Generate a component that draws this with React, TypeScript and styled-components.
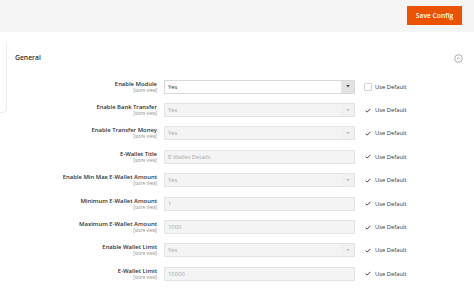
import React from "react";
import styled, { createGlobalStyle } from "styled-components";

const GlobalStyle = createGlobalStyle`
  html, body {
    margin: 0;
    padding: 0;
    background: #ffffff;
    font-family: "Open Sans", "DejaVu Sans", sans-serif;
    color: #303030;
  }
`;

type Field = {
  label: string;
  value: string;
  kind: "select" | "text";
  disabled: boolean;
  useDefault: boolean;
};

const fields: Field[] = [
  { label: "Enable Module", value: "Yes", kind: "select", disabled: false, useDefault: false },
  { label: "Enable Bank Transfer", value: "Yes", kind: "select", disabled: true, useDefault: true },
  { label: "Enable Transfer Money", value: "Yes", kind: "select", disabled: true, useDefault: true },
  { label: "E-Wallet Title", value: "E-Wallet Details", kind: "text", disabled: true, useDefault: true },
  { label: "Enable Min Max E-Wallet Amount", value: "Yes", kind: "select", disabled: true, useDefault: true },
  { label: "Minimum E-Wallet Amount", value: "1", kind: "text", disabled: true, useDefault: true },
  { label: "Maximum E-Wallet Amount", value: "1000", kind: "text", disabled: true, useDefault: true },
  { label: "Enable Wallet Limit", value: "Yes", kind: "select", disabled: true, useDefault: true },
  { label: "E-Wallet Limit", value: "10000", kind: "text", disabled: true, useDefault: true },
];

export default function App() {
  return (
    <Page>
      <GlobalStyle />
      <TopBar>
        <SaveButton>Save Config</SaveButton>
      </TopBar>
      <Body>
        <SideRail />
        <Main>
          <SectionHead>
            <SectionTitle>General</SectionTitle>
            <CollapseIcon width="9" height="9" viewBox="0 0 9 9">
              <circle cx="4.5" cy="4.5" r="3.8" fill="none" stroke="#9a9a9a" strokeWidth="0.8" />
              <path d="M2.9 5.2 L4.5 3.6 L6.1 5.2" fill="none" stroke="#9a9a9a" strokeWidth="0.8" />
            </CollapseIcon>
          </SectionHead>
          <Rows>
            {fields.map((f) => (
              <Row key={f.label}>
                <LabelCell>
                  <Label>{f.label}</Label>
                  <Scope>[store view]</Scope>
                </LabelCell>
                <Control $disabled={f.disabled}>
                  <ControlValue>{f.value}</ControlValue>
                  {f.kind === "select" && (
                    <Arrow $disabled={f.disabled}>
                      <svg width="4" height="3" viewBox="0 0 4 3">
                        <path d="M0 0 L4 0 L2 2.5 Z" fill={f.disabled ? "#c4c4c4" : "#555"} />
                      </svg>
                    </Arrow>
                  )}
                </Control>
                <DefaultCell>
                  <Box $checked={f.useDefault}>
                    {f.useDefault && (
                      <svg width="6" height="5" viewBox="0 0 6 5">
                        <path d="M0.6 2.6 L2.2 4.1 L5.4 0.8" fill="none" stroke="#303030" strokeWidth="0.9" />
                      </svg>
                    )}
                  </Box>
                  <DefaultText>Use Default</DefaultText>
                </DefaultCell>
              </Row>
            ))}
          </Rows>
        </Main>
      </Body>
    </Page>
  );
}

const Page = styled.div`
  width: 474px;
  height: 292px;
  overflow: hidden;
`;

const TopBar = styled.div`
  height: 32px;
  background: #f5f5f5;
  display: flex;
  justify-content: flex-end;
  align-items: flex-start;
  padding: 6px 12px 0 0;
  box-sizing: border-box;
`;

const SaveButton = styled.button`
  width: 55px;
  height: 19px;
  border: none;
  background: #eb5202;
  color: #ffffff;
  font-family: "Open Sans", sans-serif;
  font-weight: 600;
  font-size: 6.7px;
  padding: 0;
  display: flex;
  align-items: center;
  justify-content: center;
`;

const Body = styled.div`
  display: flex;
`;

const SideRail = styled.div`
  width: 7px;
  height: 70px;
  margin-top: 11px;
  box-sizing: border-box;
  border: 1px solid #ececec;
  border-left: none;
  border-top: none;
  border-bottom-right-radius: 5px;
  flex-shrink: 0;
`;

const Main = styled.div`
  flex: 1;
`;

const SectionHead = styled.div`
  height: 43px;
  box-sizing: border-box;
  padding: 7px 11px 0 8px;
  display: flex;
  align-items: center;
  justify-content: space-between;
`;

const SectionTitle = styled.div`
  font-size: 6.8px;
  font-weight: 600;
  color: #303030;
`;

const CollapseIcon = styled.svg`
  display: block;
  margin-top: 2px;
`;

const Rows = styled.div`
  display: flex;
  flex-direction: column;
`;

const Row = styled.div`
  height: 23.4px;
  display: grid;
  grid-template-columns: 150px 191px auto;
  column-gap: 7px;
  align-items: center;
`;

const LabelCell = styled.div`
  display: flex;
  flex-direction: column;
  align-items: flex-end;
  text-align: right;
`;

const Label = styled.div`
  font-size: 5.9px;
  font-weight: 600;
  line-height: 7px;
  color: #303030;
  white-space: nowrap;
`;

const Scope = styled.div`
  font-size: 4.4px;
  line-height: 5px;
  color: #8a8a8a;
  white-space: nowrap;
`;

const Control = styled.div<{ $disabled: boolean }>`
  height: 14px;
  box-sizing: border-box;
  border: 1px solid ${(p) => (p.$disabled ? "#e4e4e4" : "#d9d9d9")};
  background: ${(p) => (p.$disabled ? "#f4f4f4" : "#ffffff")};
  color: ${(p) => (p.$disabled ? "#a8a8a8" : "#303030")};
  display: flex;
  align-items: stretch;
`;

const ControlValue = styled.div`
  flex: 1;
  display: flex;
  align-items: center;
  padding-left: 3px;
  font-size: 5.9px;
`;

const Arrow = styled.div<{ $disabled: boolean }>`
  width: 13px;
  background: ${(p) => (p.$disabled ? "#f1f1f1" : "#e3e3e3")};
  display: flex;
  align-items: center;
  justify-content: center;
  svg {
    display: block;
  }
`;

const DefaultCell = styled.div`
  display: flex;
  align-items: center;
  gap: 3px;
  margin-left: 2px;
`;

const Box = styled.div<{ $checked: boolean }>`
  width: 8px;
  height: 8px;
  box-sizing: border-box;
  border: 1px solid ${(p) => (p.$checked ? "transparent" : "#d4d4d4")};
  border-radius: 1px;
  background: #ffffff;
  display: flex;
  align-items: center;
  justify-content: center;
`;

const DefaultText = styled.div`
  font-size: 5.8px;
  color: #303030;
  white-space: nowrap;
`;
